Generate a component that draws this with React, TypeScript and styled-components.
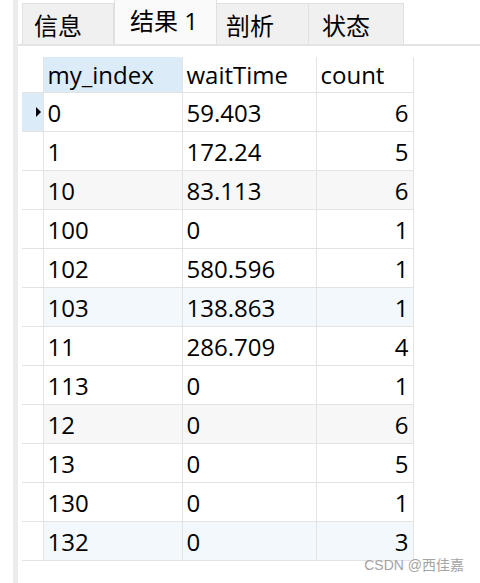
import React from 'react';
import styled, { createGlobalStyle } from 'styled-components';

const GlobalStyle = createGlobalStyle`
  html, body {
    margin: 0;
    padding: 0;
    background: #fff;
  }
  body {
    font-family: 'Open Sans', 'Noto Sans CJK SC', sans-serif;
    color: #000;
  }
`;

const Page = styled.div`
  display: flex;
  width: 480px;
  height: 583px;
  padding-left: 13px;
  box-sizing: border-box;
  overflow: hidden;
  position: relative;
`;

const Stripe = styled.div`
  width: 5px;
  background: #ececec;
`;

const Main = styled.div`
  flex: 1;
  display: flex;
  flex-direction: column;
`;

const TabBar = styled.div`
  display: flex;
  align-items: flex-end;
  height: 46px;
  padding-left: 4px;
  border-bottom: 2px solid #e3e3e3;
  box-sizing: border-box;
`;

const Tab = styled.div<{ $w: number; $pl: number; $active?: boolean }>`
  width: ${(p) => p.$w}px;
  height: ${(p) => (p.$active ? 45 : 41)}px;
  box-sizing: border-box;
  display: flex;
  align-items: center;
  padding-left: ${(p) => p.$pl}px;
  padding-bottom: ${(p) => (p.$active ? 6 : 0)}px;
  font-family: 'Open Sans', 'Noto Sans CJK SC', sans-serif;
  font-size: 24px;
  white-space: nowrap;
  background: ${(p) => (p.$active ? '#fafafa' : '#f0f0f0')};
  border: 1px solid #e0e0e0;
  border-bottom: none;
  border-left-width: ${(p) => (p.$active ? 1 : 0)}px;
  &:first-child {
    border-left-width: 1px;
  }
`;

const Grid = styled.table`
  margin: 11px 0 0 4px;
  width: 391px;
  border-collapse: collapse;
  table-layout: fixed;
  font-size: 24px;
`;

const HeadCell = styled.th<{ $blue?: boolean }>`
  height: 35px;
  padding: 0 4px;
  text-align: left;
  font-weight: normal;
  background: ${(p) => (p.$blue ? '#dcebf8' : '#fff')};
  border-right: 1px solid #e3e3e3;
  border-bottom: 1px solid #e3e3e3;
  white-space: nowrap;
  overflow: hidden;
`;

const Row = styled.tr<{ $tone: 'white' | 'gray' | 'blue' }>`
  height: 39px;
  background: ${(p) => (p.$tone === 'gray' ? '#f7f7f7' : p.$tone === 'blue' ? '#f3f8fd' : '#fff')};
`;

const Marker = styled.td<{ $current?: boolean }>`
  padding: 0;
  background: ${(p) => (p.$current ? '#dcebf8' : '#fff')};
  border-right: 1px solid #e3e3e3;
  border-bottom: 1px solid #e3e3e3;
  text-align: right;
  vertical-align: middle;
  line-height: 0;
`;

const Cell = styled.td<{ $right?: boolean }>`
  padding: 0 4px;
  text-align: ${(p) => (p.$right ? 'right' : 'left')};
  border-right: 1px solid #e3e3e3;
  border-bottom: 1px solid #e3e3e3;
  white-space: nowrap;
  overflow: hidden;
`;

const Arrow = styled.span`
  display: inline-block;
  width: 0;
  height: 0;
  border-top: 5px solid transparent;
  border-bottom: 5px solid transparent;
  border-left: 5px solid #000;
  margin-right: 2px;
`;

const Watermark = styled.div`
  position: absolute;
  right: 16px;
  bottom: 9px;
  font-family: 'Liberation Sans', 'Noto Sans CJK SC', sans-serif;
  font-size: 14px;
  color: #a3a3a3;
`;

const rows: [string, string, string][] = [
  ['0', '59.403', '6'],
  ['1', '172.24', '5'],
  ['10', '83.113', '6'],
  ['100', '0', '1'],
  ['102', '580.596', '1'],
  ['103', '138.863', '1'],
  ['11', '286.709', '4'],
  ['113', '0', '1'],
  ['12', '0', '6'],
  ['13', '0', '5'],
  ['130', '0', '1'],
  ['132', '0', '3'],
];

const tone = (i: number) => (i % 6 === 2 ? 'gray' : i % 6 === 5 ? 'blue' : 'white');

export default function App() {
  return (
    <>
      <GlobalStyle />
      <Page>
        <Stripe />
        <Main>
          <TabBar>
            <Tab $w={92} $pl={11}>
              信息
            </Tab>
            <Tab $w={103} $pl={15} $active>
              结果 1
            </Tab>
            <Tab $w={92} $pl={9}>
              剖析
            </Tab>
            <Tab $w={95} $pl={13}>
              状态
            </Tab>
          </TabBar>
          <Grid>
            <colgroup>
              <col style={{ width: 21 }} />
              <col style={{ width: 139 }} />
              <col style={{ width: 134 }} />
              <col style={{ width: 97 }} />
            </colgroup>
            <thead>
              <tr>
                <HeadCell />
                <HeadCell $blue>my_index</HeadCell>
                <HeadCell>waitTime</HeadCell>
                <HeadCell>count</HeadCell>
              </tr>
            </thead>
            <tbody>
              {rows.map((r, i) => (
                <Row key={i} $tone={tone(i)}>
                  <Marker $current={i === 0}>{i === 0 && <Arrow />}</Marker>
                  <Cell>{r[0]}</Cell>
                  <Cell>{r[1]}</Cell>
                  <Cell $right>{r[2]}</Cell>
                </Row>
              ))}
            </tbody>
          </Grid>
        </Main>
        <Watermark>CSDN @西佳嘉</Watermark>
      </Page>
    </>
  );
}
